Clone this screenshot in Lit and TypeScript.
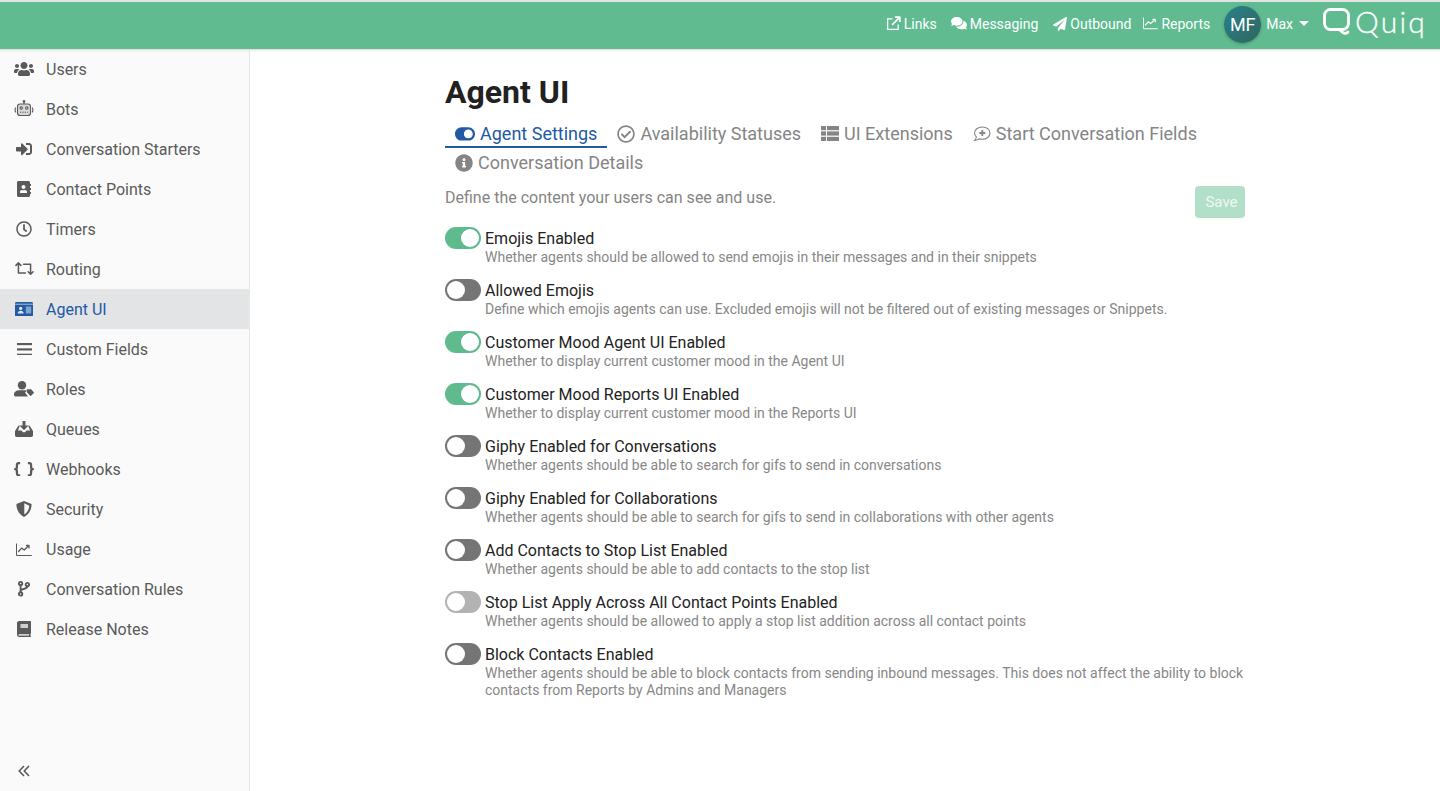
import { LitElement, html, css, svg } from "lit";
import { customElement } from "lit/decorators.js";

const fa = (vb: string, d: string) => html`<svg class="ic" viewBox="0 0 ${vb} 512" fill="currentColor"><path d="${d}"></path></svg>`;
const line = (vb: string, content: any) => html`<svg class="ic" viewBox="0 0 ${vb}" fill="none" stroke="currentColor" stroke-linecap="round" stroke-linejoin="round">${content}</svg>`;

const I: Record<string, any> = {
  users: fa("640", "M96 224c35.3 0 64-28.7 64-64s-28.7-64-64-64-64 28.7-64 64 28.7 64 64 64zm448 0c35.3 0 64-28.7 64-64s-28.7-64-64-64-64 28.7-64 64 28.7 64 64 64zm32 32h-64c-17.6 0-33.5 7.1-45.1 18.6 40.3 22.1 68.9 62 75.1 109.4h66c17.7 0 32-14.3 32-32v-32c0-35.3-28.7-64-64-64zm-256 0c61.9 0 112-50.1 112-112S381.9 32 320 32 208 82.1 208 144s50.1 112 112 112zm76.8 32h-8.3c-20.8 10-43.9 16-68.5 16s-47.6-6-68.5-16h-8.3C179.6 288 128 339.6 128 403.2V432c0 26.5 21.5 48 48 48h288c26.5 0 48-21.5 48-48v-28.8c0-63.6-51.6-115.2-115.2-115.2zm-223.7-13.4C161.5 263.1 145.6 256 128 256H64c-35.3 0-64 28.7-64 64v32c0 17.7 14.3 32 32 32h65.9c6.3-47.4 34.9-87.3 75.2-109.4z"),
  bot: html`<svg class="ic" viewBox="0 0 20 20" fill="none" stroke="currentColor" stroke-width="1.1"><rect x="3.5" y="5" width="13" height="11.5" rx="2.6" fill="#d8d8d8"></rect><path d="M10 5V2.6M1.8 8.5c-.9 1.6-.9 3.4 0 5M18.2 8.5c.9 1.6.9 3.4 0 5"></path><circle cx="10" cy="2.4" r=".8" fill="currentColor"></circle><circle cx="7.2" cy="9" r="1.2"></circle><circle cx="12.8" cy="9" r="1.2"></circle><path d="M6 13.3h8" stroke-dasharray="1.2 1.2"></path></svg>`,
  signin: fa("512", "M416 448h-84c-6.6 0-12-5.4-12-12v-40c0-6.6 5.4-12 12-12h84c17.7 0 32-14.3 32-32V160c0-17.7-14.3-32-32-32h-84c-6.6 0-12-5.4-12-12V76c0-6.6 5.4-12 12-12h84c53 0 96 43 96 96v192c0 53-43 96-96 96zm-47-201L201 79c-15-15-41-4.5-41 17v96H24c-13.3 0-24 10.7-24 24v96c0 13.3 10.7 24 24 24h136v96c0 21.5 26 32 41 17l168-168c9.3-9.4 9.3-24.6 0-34z"),
  book2: fa("448", "M436 160c6.6 0 12-5.4 12-12v-40c0-6.6-5.4-12-12-12h-20V48c0-26.5-21.5-48-48-48H48C21.5 0 0 21.5 0 48v416c0 26.5 21.5 48 48 48h320c26.5 0 48-21.5 48-48v-48h20c6.6 0 12-5.4 12-12v-40c0-6.6-5.4-12-12-12h-20v-64h20c6.6 0 12-5.4 12-12v-40c0-6.6-5.4-12-12-12h-20v-64h20zm-228-32c35.3 0 64 28.7 64 64s-28.7 64-64 64-64-28.7-64-64 28.7-64 64-64zm112 236.8c0 10.6-10 19.2-22.4 19.2H118.4C106 384 96 375.4 96 364.8v-19.2c0-31.8 30.1-57.6 67.2-57.6h5c12.3 5.1 25.7 8 39.8 8s27.6-2.9 39.8-8h5c37.1 0 67.2 25.8 67.2 57.6v19.2z"),
  clock: fa("512", "M256 8C119 8 8 119 8 256s111 248 248 248 248-111 248-248S393 8 256 8zm0 448c-110.5 0-200-89.5-200-200S145.5 56 256 56s200 89.5 200 200-89.5 200-200 200zm61.8-104.4l-84.9-61.7c-3.1-2.3-4.9-5.9-4.9-9.7V116c0-6.6 5.4-12 12-12h32c6.6 0 12 5.4 12 12v141.7l66.8 48.6c5.4 3.9 6.5 11.4 2.6 16.8L334.6 349c-3.9 5.3-11.4 6.5-16.8 2.6z"),
  retweet: line("20 16", svg`<path stroke-width="1.6" d="M1 4.6 3.6 2l2.6 2.6M3.6 2.4V12.6H11M19 11.4 16.4 14l-2.6-2.6M16.4 13.6V3.4H9"></path>`),
  idcard: html`<svg class="ic" viewBox="0 0 20 16"><path fill="currentColor" d="M1.5 0h17A1.5 1.5 0 0 1 20 1.5V14.5A1.5 1.5 0 0 1 18.500 16h-17A1.500 1.500 0 0 1 0 14.500V1.500A1.500 1.500 0 0 1 1.500 0z"></path><rect y="2" width="20" height=".8" fill="#e3e4e6"></rect><circle cx="6.300" cy="7.200" r="1.800" fill="#e3e4e6"></circle><path fill="#e3e4e6" d="M3 12.800c0-2 1.400-3 3.300-3s3.300 1 3.300 3z"></path><rect x="12" y="5" width="6" height="7.800" fill="#7fa3d0"></rect></svg>`,
  bars: html`<svg class="ic" viewBox="0 0 14 12" fill="currentColor"><rect y="0" width="14" height="2"></rect><rect y="5" width="14" height="2"></rect><rect y="10" width="14" height="2"></rect></svg>`,
  roles: html`<svg class="ic" viewBox="0 0 20 16" fill="currentColor"><circle cx="8" cy="4.200" r="4.200"></circle><path d="M5 9.300h6c.7 0 1.300.1 1.800.4L11 11.500 14 15.500H1.500C.7 15.500 0 14.900 0 14.100v-.9C0 11 2.200 9.300 5 9.300z"></path><path d="M13.500 8.200h3.100c.3 0 .5.100.7.300l2.500 2.700c.2.300.2.700 0 .9l-2.700 2.600c-.3.300-.7.300-.9 0l-3.100-3.200c-.2-.2-.3-.4-.3-.7V8.900c0-.4.300-.7.700-.7z"></path></svg>`,
  inbox: html`<svg class="ic" viewBox="0 0 18 16" fill="currentColor"><path d="M7.500 0h3v4.500h3L9 9.200 4.500 4.500h3z"></path><path d="M3.500 4.500h1.300L3 9.600h3.500L8 11.200h2l1.500-1.600H15l-1.800-5.100h1.300L18 10v4.300c0 .9-.7 1.700-1.700 1.700H1.700C.7 16 0 15.200 0 14.300V10z"></path></svg>`,
  braces: line("18 13", svg`<path stroke-width="2" stroke-linecap="butt" d="M5.500 1H4.200C3 1 2.600 1.700 2.600 3v1.800c0 1-.6 1.700-1.600 1.700 1 0 1.600.7 1.600 1.700V10c0 1.300.4 2 1.600 2h1.300M12.500 1h1.300C15 1 15.400 1.700 15.400 3v1.800c0 1 .6 1.700 1.600 1.700-1 0-1.600.7-1.600 1.700V10c0 1.300-.4 2-1.600 2h-1.300"></path>`),
  shield: html`<svg class="ic" viewBox="0 0 16 16"><path fill="currentColor" d="M8 0 1 2.700C.6 2.900.4 3.200.4 3.600c0 5 2.600 9.600 7.100 12.200.3.200.7.200 1 0 4.500-2.600 7.100-7.200 7.100-12.200 0-.4-.2-.7-.6-.9z"></path><path fill="#fafafa" d="M8.300 2.300v11.300c3-2 4.700-5.300 5-8.900z"></path></svg>`,
  chart: line("16 13", svg`<path stroke-width="1" stroke-linecap="butt" d="M.5 .5V12.500H15.800"></path><path stroke-width="1.300" d="M2.600 8.500 5.600 5.100 8.200 7 12.200 3"></path><path stroke-width="1.300" d="M10.500 2.500H13V5"></path>`),
  branch: html`<svg class="ic" viewBox="0 0 12 15.500" fill="none" stroke="currentColor" stroke-width="1.900"><circle cx="2.600" cy="2.600" r="1.700"></circle><circle cx="2.600" cy="12.900" r="1.700"></circle><circle cx="9.400" cy="3.600" r="1.700"></circle><path d="M2.600 4.300v6.900M2.600 10c0-2.700 6.800-1.200 6.800-4.700"></path></svg>`,
  book: html`<svg class="ic" viewBox="0 0 14 16"><path fill="currentColor" d="M2.200 0H13c.6 0 1 .4 1 1v11c0 .4-.2.700-.5.800v1.900c.3.100.5.400.5.700v.2c0 .2-.2.400-.4.400H2.200C1 16 0 15 0 13.800V2.200C0 1 1 0 2.200 0z"></path><rect x="3.500" y="3" width="7.500" height="4" fill="#cfcfcf"></rect><path fill="#cfcfcf" d="M2.300 13H12v1.800H2.300a.9.900 0 0 1 0-1.800z"></path></svg>`,
  ext: line("16 16", svg`<path stroke-width="1.400" stroke-linecap="butt" stroke-linejoin="miter" d="M7 3H1.700V14.300H13V9"></path><path stroke-width="1.700" stroke-linecap="butt" d="M6.500 9.500 14.500 1.500M9.500 1.200H14.800V6.500"></path>`),
  comments: fa("576", "M416 192c0-88.4-93.100-160-208-160S0 103.600 0 192c0 34.300 14.100 65.900 38 92-13.400 30.200-35.500 54.200-35.800 54.500-2.200 2.300-2.800 5.700-1.500 8.700S4.800 352 8 352c36.600 0 66.900-12.300 88.700-25 32.200 15.700 70.300 25 111.300 25 114.900 0 208-71.600 208-160zm122 220c23.900-26 38-57.700 38-92 0-66.900-53.500-124.200-129.300-148.100.9 6.600 1.300 13.300 1.300 20.100 0 105.900-107.700 192-240 192-10.800 0-21.300-.8-31.700-1.900C207.800 439.600 281.800 480 368 480c41 0 79.100-9.200 111.300-25 21.800 12.700 52.100 25 88.700 25 3.200 0 6.100-1.900 7.300-4.800 1.300-2.900.7-6.300-1.500-8.700-.3-.3-22.400-24.200-35.800-54.500z"),
  plane: fa("512", "M476 3.200L12.500 270.600c-18.100 10.400-15.800 35.600 2.200 43.200L121 358.400l287.300-253.200c5.500-4.900 13.300 2.600 8.600 8.300L176 407v80.500c0 23.600 28.500 32.900 42.500 15.800L282 426l124.600 52.200c14.200 6 30.400-2.900 33-18.200l72-432C515 7.800 493.300-6.800 476 3.200z"),
  toggle: fa("576", "M384 64H192C86 64 0 150 0 256s86 192 192 192h192c106 0 192-86 192-192S490 64 384 64zm0 320c-70.800 0-128-57.300-128-128 0-70.800 57.300-128 128-128 70.800 0 128 57.300 128 128 0 70.800-57.300 128-128 128z"),
  check: fa("512", "M256 8C119.033 8 8 119.033 8 256s111.033 248 248 248 248-111.033 248-248S392.967 8 256 8zm0 48c110.532 0 200 89.451 200 200 0 110.532-89.451 200-200 200-110.532 0-200-89.451-200-200 0-110.532 89.451-200 200-200m140.204 130.267l-22.536-22.718c-4.667-4.705-12.265-4.736-16.970-.068L215.346 303.697l-59.792-60.277c-4.667-4.705-12.265-4.736-16.970-.069l-22.719 22.536c-4.705 4.667-4.736 12.265-.068 16.971l90.781 91.516c4.667 4.705 12.265 4.736 16.970.068l172.589-171.204c4.704-4.668 4.734-12.266.067-16.971z"),
  list: html`<svg class="ic" viewBox="0 0 18 15" fill="currentColor"><rect width="5" height="4.200" y="0"></rect><rect x="6" width="12" height="4.200" y="0"></rect><rect width="5" height="4.200" y="5.400"></rect><rect x="6" width="12" height="4.200" y="5.400"></rect><rect width="5" height="4.200" y="10.800"></rect><rect x="6" width="12" height="4.200" y="10.800"></rect></svg>`,
  bubble: html`<svg class="ic" viewBox="0 0 18 16" fill="none" stroke="currentColor"><path stroke-width="1.100" d="M9.300 1C4.900 1 1.500 3.700 1.500 7c0 1.500.7 2.900 1.900 4-.3 1.300-1 2.500-1.900 3.500 1.500 0 3.300-.7 4.400-1.600 1 .3 2.200.4 3.400.4 4.300 0 7.700-2.800 7.700-6.300S13.600 1 9.300 1z"></path><path stroke-width="1.800" d="M9.300 4v6M6.300 7h6"></path></svg>`,
  info: fa("512", "M256 8C119.043 8 8 119.083 8 256c0 136.997 111.043 248 248 248s248-111.003 248-248C504 119.083 392.957 8 256 8zm0 110c23.196 0 42 18.804 42 42s-18.804 42-42 42-42-18.804-42-42 18.804-42 42-42zm56 254c0 6.627-5.373 12-12 12h-88c-6.627 0-12-5.373-12-12v-24c0-6.627 5.373-12 12-12h12v-64h-12c-6.627 0-12-5.373-12-12v-24c0-6.627 5.373-12 12-12h64c6.627 0 12 5.373 12 12v100h12c6.627 0 12 5.373 12 12v24z"),
};

const NAV = [
  ["users", "Users", 20], ["bot", "Bots", 20], ["signin", "Conversation Starters", 16], ["book2", "Contact Points", 14],
  ["clock", "Timers", 16], ["retweet", "Routing", 19], ["idcard", "Agent UI", 18], ["bars", "Custom Fields", 15],
  ["roles", "Roles", 20], ["inbox", "Queues", 18], ["braces", "Webhooks", 20], ["shield", "Security", 16],
  ["chart", "Usage", 16], ["branch", "Conversation Rules", 12], ["book", "Release Notes", 14],
] as const;

const TABS = [
  ["toggle", "Agent Settings", 20], ["check", "Availability Statuses", 18], ["list", "UI Extensions", 18],
  ["bubble", "Start Conversation Fields", 18], ["info", "Conversation Details", 18],
] as const;

const SETTINGS: [string, string, string][] = [
  ["Emojis Enabled", "Whether agents should be allowed to send emojis in their messages and in their snippets", "on"],
  ["Allowed Emojis", "Define which emojis agents can use. Excluded emojis will not be filtered out of existing messages or Snippets.", "off"],
  ["Customer Mood Agent UI Enabled", "Whether to display current customer mood in the Agent UI", "on"],
  ["Customer Mood Reports UI Enabled", "Whether to display current customer mood in the Reports UI", "on"],
  ["Giphy Enabled for Conversations", "Whether agents should be able to search for gifs to send in conversations", "off"],
  ["Giphy Enabled for Collaborations", "Whether agents should be able to search for gifs to send in collaborations with other agents", "off"],
  ["Add Contacts to Stop List Enabled", "Whether agents should be able to add contacts to the stop list", "off"],
  ["Stop List Apply Across All Contact Points Enabled", "Whether agents should be allowed to apply a stop list addition across all contact points", "dis"],
  ["Block Contacts Enabled", "Whether agents should be able to block contacts from sending inbound messages. This does not affect the ability to block contacts from Reports by Admins and Managers", "off"],
];

@customElement("app-root")
export class AppRoot extends LitElement {
  static styles = css`
    :host { display: block; height: 791px; overflow: hidden; font-family: Roboto, "Liberation Sans", sans-serif; background: #fff; color: #222; }
    * { box-sizing: border-box; }
    .ic { display: block; width: 100%; height: auto; max-height: 100%; }
    header { height: 50px; background: #60bb91; border-top: 2px solid #e4e4e4; border-bottom: 1px solid #dfe6e2; display: flex; align-items: center; justify-content: flex-end; padding: 0 13px 4px 0; color: #fff; font-size: 14px; position: relative; z-index: 1; box-shadow: 0 1px 2px rgba(0,0,0,.08); }
    .hl { display: flex; align-items: center; gap: 3px; margin-right: 14px; white-space: nowrap; }
    .hl:nth-child(2) { margin-right: 15px; }
    .hl:nth-child(3) { margin-right: 12px; }
    .hl span.i { display: block; }
    .avatar { width: 37px; height: 37px; border-radius: 50%; background: linear-gradient(135deg, #2b808b, #2f6660); display: flex; align-items: center; justify-content: center; font-size: 18px; box-shadow: 0 1px 3px rgba(0,0,0,.25); margin: 2px 5px 0 0; }
    .caret { width: 0; height: 0; border: 5px solid transparent; border-top-color: #fff; border-bottom: 0; margin: 0 14px 0 6px; }
    .logo { display: flex; align-items: flex-start; gap: 5px; height: 36px; margin-top: 2px; }
    .logo svg { width: 27px; height: 27px; display: block; margin-top: 1px; }
    .logotext { font-family: Lato, sans-serif; font-weight: 300; font-size: 30px; letter-spacing: 2.2px; line-height: 28px; -webkit-text-stroke: .3px #fff; }
    .body { display: flex; height: 742px; margin-top: -1px; }
    aside { width: 250px; flex: none; background: #fafafa; border-right: 1px solid #e6e6e6; display: flex; flex-direction: column; }
    .item { height: 40px; display: flex; align-items: center; font-size: 16px; color: #5a5a5a; }
    .item.active { background: #e3e4e6; color: #2159a5; }
    .nic { width: 20px; margin-left: 14px; margin-right: 12px; display: flex; justify-content: center; align-items: center; flex: none; }
    .collapse { margin-top: auto; padding: 0 0 14px 18px; color: #555; }
    .collapse svg { width: 12px; height: 12px; display: block; }
    main { flex: 1; display: flex; justify-content: center; }
    .col { width: 800px; padding-top: 24px; }
    h1 { margin: 0; font-size: 32px; font-weight: 700; line-height: 38px; color: #212121; }
    .tabs { display: flex; flex-wrap: wrap; margin-top: 8px; }
    .tab { display: flex; align-items: center; gap: 5px; padding: 0 10px; height: 29px; font-size: 18px; color: #858585; white-space: nowrap; border-bottom: 2px solid transparent; }
    .tab:nth-child(-n + 4) { padding-top: 2px; }
    .tab.active { color: #2159a5; border-bottom-color: #2159a5; }
    .tab:nth-child(n + 5) { margin-top: 1px; }
    .tic { display: block; flex: none; }
    .sub { display: flex; justify-content: space-between; align-items: flex-start; margin-top: 8px; height: 41px; }
    .sub p { margin: 2px 0 0; font-size: 16px; line-height: 20px; color: #858585; }
    .save { width: 50px; height: 32px; border-radius: 4px; background: #b2dfc8; color: #eef8f3; font-size: 15px; padding-left: 3px; display: flex; align-items: center; justify-content: center; }
    .row { display: flex; gap: 4px; min-height: 52px; }
    .sw { width: 36px; height: 22px; border-radius: 11px; flex: none; background: #757575; padding: 2px; display: flex; justify-content: flex-start; }
    .sw i { width: 18px; height: 18px; border-radius: 50%; background: #fff; display: block; }
    .sw.on { background: #5fba8d; justify-content: flex-end; }
    .sw.dis { background: #b3b3b3; }
    .lab { font-size: 16px; line-height: 20px; color: #222; padding-top: 2px; }
    .desc { font-size: 14px; line-height: 17px; color: #878787; }
  `;

  render() {
    return html`
      <header>
        <div class="hl"><span class="i" style="width:15px">${I.ext}</span>Links</div>
        <div class="hl"><span class="i" style="width:16px">${I.comments}</span>Messaging</div>
        <div class="hl"><span class="i" style="width:14px">${I.plane}</span>Outbound</div>
        <div class="hl"><span class="i" style="width:15px">${I.chart}</span>Reports</div>
        <div class="avatar">MF</div>
        <span>Max</span><div class="caret"></div>
        <div class="logo">
          <svg viewBox="0 0 27 27" fill="none" stroke="#fff" stroke-width="2.800" stroke-linecap="round" stroke-linejoin="round"><path d="M7.500 1.500h12c3.300 0 6 2.700 6 6v8c0 3.300-2.700 6-6 6H7.500c-3.300 0-6-2.700-6-6v-8c0-3.300 2.700-6 6-6z"></path><path d="M16 21.500l4 3.200c1.400 1 3.700 .7 5-.7"></path></svg>
          <span class="logotext">Quiq</span>
        </div>
      </header>
      <div class="body">
        <aside>
          ${NAV.map(([k, t, w]) => html`<div class="item ${t === "Agent UI" ? "active" : ""}"><span class="nic"><span style="width:${w}px;display:block">${I[k]}</span></span>${t}</div>`)}
          <div class="collapse"><svg viewBox="0 0 12 12" fill="none" stroke="currentColor" stroke-width="1.500"><path d="M6 1 1.200 6 6 11M11 1 6.200 6 11 11"></path></svg></div>
        </aside>
        <main>
          <div class="col">
            <h1>Agent UI</h1>
            <div class="tabs">
              ${TABS.map(([k, t, w], i) => html`<div class="tab ${i === 0 ? "active" : ""}"><span class="tic" style="width:${w}px">${I[k]}</span>${t}</div>`)}
            </div>
            <div class="sub"><p>Define the content your users can see and use.</p><div class="save">Save</div></div>
            ${SETTINGS.map(([l, d, s]) => html`<div class="row"><div class="sw ${s}"><i></i></div><div><div class="lab">${l}</div><div class="desc">${d}</div></div></div>`)}
          </div>
        </main>
      </div>
    `;
  }
}
